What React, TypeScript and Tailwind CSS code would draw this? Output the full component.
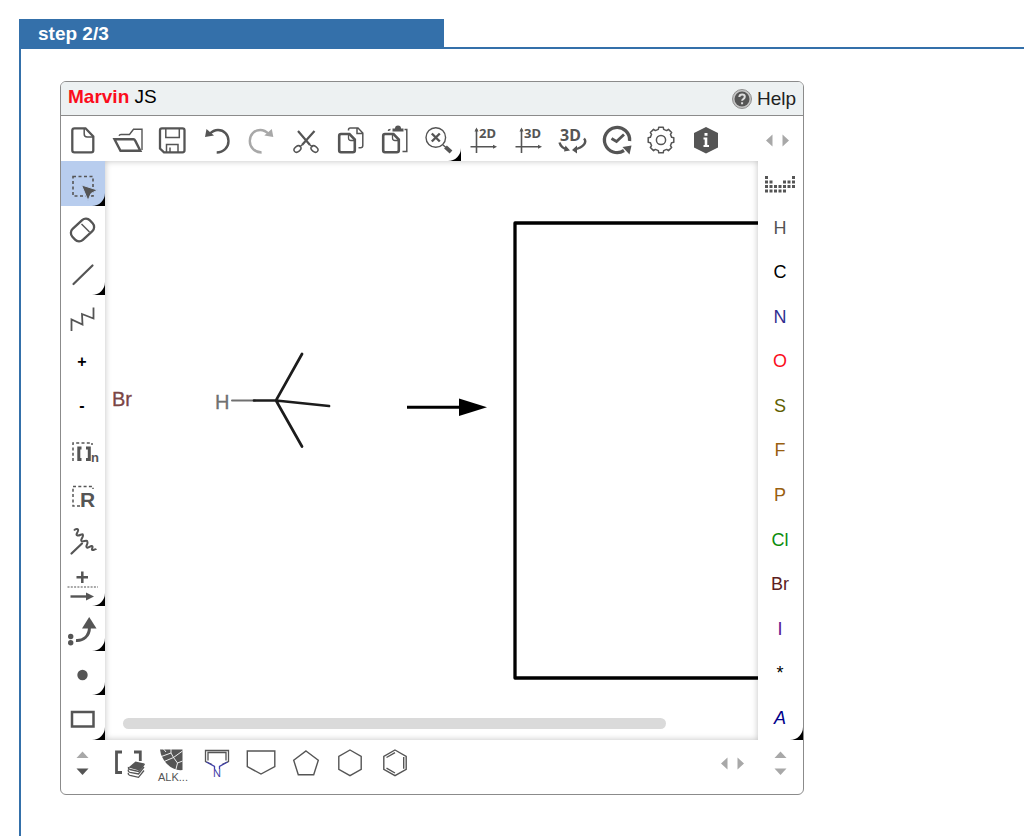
import type { ReactNode } from "react";

type Tool = {
  label: string;
  icon: ReactNode;
  menu?: boolean;
  active?: boolean;
};

const INK = "#555555";
const PALE = "#a8a8a8";

// gear outline, eight teeth
const gearPoints = Array.from({ length: 8 }, (_, i) =>
  [
    [-14, 11],
    [-10, 13],
    [10, 13],
    [14, 11],
  ].map(([deg, r]) => {
    const a = ((i * 45 + deg) * Math.PI) / 180;
    return `${(22 + r * Math.sin(a)).toFixed(2)},${(23 - r * Math.cos(a)).toFixed(2)}`;
  }),
)
  .flat()
  .join(" ");

const hexagon = "22,10 33.2,16.3 33.2,29.3 22,35.7 10.8,29.3 10.8,16.3";

const undoShape = (
  <>
    <path d="M14.5 17Q18.5 13 23 13C29 13 33.5 17.5 33.5 24C33.5 30.5 28.5 35.5 21.7 35.5" strokeWidth="2.4" />
    <path d="M10 20L11.5 12L19 18.5Z" fill="currentColor" stroke="none" />
  </>
);

const axes = (
  <>
    <path d="M15.5 12V36M9.5 29.7H34" strokeWidth="1.6" />
    <path d="M13.5 14.5L15.5 10.5L17.5 14.5ZM32 27.7L36 29.7L32 31.7Z" fill="currentColor" stroke="none" />
  </>
);

const topTools: Tool[] = [
  {
    label: "New",
    icon: (
      <>
        <path d="M11.3 13.5Q11.3 11.3 13.5 11.3H24.5L32.3 19.5V33.2Q32.3 35.3 30.2 35.3H13.5Q11.3 35.3 11.3 33.2Z" strokeWidth="2.3" />
        <path d="M23.2 12V17Q23.2 20 26.2 20H32" strokeWidth="1.5" />
      </>
    ),
  },
  {
    label: "Open",
    icon: (
      <>
        <path d="M8.5 22.3H27.5Q28.5 22.3 29.2 23.6L34.3 33.7H14.5Z" strokeWidth="2.4" />
        <path d="M13 18.7Q13.5 17.5 15 17.5H23.5L27.5 12.3H36V33" strokeWidth="1.4" />
      </>
    ),
  },
  {
    label: "Save",
    icon: (
      <>
        <path d="M12 11.3H32.5Q34.5 11.3 34.5 13.3V33.3Q34.5 35.3 32.5 35.3H14L10 31.5V13.3Q10 11.3 12 11.3Z" strokeWidth="2.3" />
        <path d="M15.8 12V20.5H29.3V12M16.5 35V27.5H28V35M20 30.5V35" strokeWidth="1.5" />
      </>
    ),
  },
  { label: "Undo", icon: undoShape },
  { label: "Redo", icon: <g transform="translate(44.3 0) scale(-1 1)" color={PALE} stroke="currentColor">{undoShape}</g> },
  {
    label: "Cut",
    icon: (
      <>
        <path d="M14 14L26 28M30.5 14L18 28" strokeWidth="2.2" />
        <ellipse cx="13.5" cy="32" rx="3.8" ry="2.7" transform="rotate(-38 13.5 32)" strokeWidth="1.5" />
        <ellipse cx="30.5" cy="32" rx="3.8" ry="2.7" transform="rotate(38 30.5 32)" strokeWidth="1.5" />
        <path d="M26 28L29 30M18 28L15.5 30" strokeWidth="1.5" />
      </>
    ),
  },
  {
    label: "Copy",
    icon: (
      <>
        <path d="M20.5 13.5V12.8Q20.5 11 22.3 11H30L34.8 16V28.5Q34.8 30.8 32.5 30.8H30.5M29 11.5V16.5H34.5" strokeWidth="1.5" />
        <path d="M13 17H21.5L26.8 22.5V33.3Q26.8 35.3 24.8 35.3H13Q11.2 35.3 11.2 33.3V19Q11.2 17 13 17Z" strokeWidth="2.6" />
        <path d="M20.5 18V21Q20.5 23.5 23 23.5H26" strokeWidth="1.3" />
      </>
    ),
  },
  {
    label: "Paste",
    icon: (
      <>
        <path d="M16.5 14Q16.5 12.5 18.5 12.5M32.5 12.5H34.8V34.5H30.5" strokeWidth="1.5" />
        <path d="M20.500 14.5V11.500H23Q23 8.500 26 8.5Q29 8.5 29 11.5H31.500V14.5Z" fill="currentColor" stroke="none" />
        <path d="M13 17H21.5L26.8 22.5V33.3Q26.8 35.3 24.8 35.3H13Q11.2 35.3 11.2 33.3V19Q11.2 17 13 17Z" strokeWidth="2.6" />
        <path d="M20.5 18V21Q20.5 23.5 23 23.5H26" strokeWidth="1.3" />
      </>
    ),
  },
  {
    label: "Zoom",
    menu: true,
    icon: (
      <>
        <circle cx="18.8" cy="20.5" r="9.8" strokeWidth="1.4" />
        <path d="M14.8 16.5L22.8 24.5M22.8 16.5L14.8 24.5" strokeWidth="2.4" />
        <path d="M26 28L29 30.5" strokeWidth="1.5" />
        <path d="M28.5 30L34 35" strokeWidth="4" />
      </>
    ),
  },
  {
    label: "Clean in 2D",
    icon: (
      <>
        {axes}
        <text x="18" y="21" fill="currentColor" stroke="none" className="font-['Noto_Sans',sans-serif] text-[13px] font-bold">2D</text>
      </>
    ),
  },
  {
    label: "Clean in 3D",
    icon: (
      <>
        {axes}
        <text x="18" y="21" fill="currentColor" stroke="none" className="font-['Noto_Sans',sans-serif] text-[13px] font-bold">3D</text>
      </>
    ),
  },
  {
    label: "3D view",
    icon: (
      <>
        <text x="10" y="24" fill="currentColor" stroke="none" className="font-['Noto_Sans',sans-serif] text-base font-bold">3D</text>
        <path d="M9.5 25.5Q11 31 17.5 32.5M34 21.500Q36.5 24 34 27.5Q31 31 25 32.3" strokeWidth="2.4" />
        <path d="M22 33L27 28.5V36.5ZM15.500 28.500L20 33.500L14 34.500Z" fill="currentColor" stroke="none" />
      </>
    ),
  },
  {
    label: "Auto clean",
    icon: (
      <>
        <path d="M29 33.5A12.6 12.6 0 1 1 34.6 24" strokeWidth="3.3" />
        <path d="M27.5 30L36.5 28.5L34.5 37.5Z" fill="currentColor" stroke="none" />
        <path d="M16.5 21.5L21.5 24.5L29 17.5" strokeWidth="2.8" />
      </>
    ),
  },
  {
    label: "Settings",
    icon: (
      <>
        <polygon points={gearPoints} strokeWidth="1.5" strokeLinejoin="round" />
        <circle cx="22" cy="23" r="4.6" strokeWidth="1.5" />
      </>
    ),
  },
  {
    label: "About",
    icon: (
      <>
        <polygon points="22,10 34,16 34,30.5 22,36.5 10,30.5 10,16" fill="currentColor" stroke="none" />
        <path d="M19.5 20.5H23.3V28H25V30H19.5V28H20.7V22.5H19.5ZM20.5 16H23.5V18.8H20.5Z" fill="#fff" stroke="none" />
      </>
    ),
  },
];

const leftTools: Tool[] = [
  {
    label: "Select",
    active: true,
    menu: true,
    icon: (
      <>
        <path d="M12 14.500H32V34H12Z" strokeWidth="1.6" strokeDasharray="3 2.5" />
        <path d="M20.5 23L36.5 28L30 31.500L27 38.500Z" fill="currentColor" stroke="#b8cdee" strokeWidth="1" />
      </>
    ),
  },
  {
    label: "Erase",
    icon: (
      <>
        <rect x="-12" y="-7.5" width="24" height="15" rx="5.500" transform="translate(21.5 24) rotate(-43)" strokeWidth="2.3" />
        <path d="M20.5 18L28.5 26" strokeWidth="1.4" />
      </>
    ),
  },
  { label: "Single bond", menu: true, icon: <path d="M12.5 33L31.5 14.5" strokeWidth="2.2" strokeLinecap="round" /> },
  { label: "Chain", icon: <path d="M10.500 36V24.5L21.500 29.500L21 19L32.500 23.500V12.500" strokeWidth="1.8" /> },
  { label: "Increase charge", icon: <text x="21" y="27" textAnchor="middle" fill="#000" stroke="none" className="text-base font-bold">+</text> },
  { label: "Decrease charge", icon: <text x="21" y="27" textAnchor="middle" fill="#000" stroke="none" className="text-base font-bold">-</text> },
  {
    label: "Repeating unit",
    icon: (
      <>
        <path d="M12 32V14H31V16" strokeWidth="1.5" strokeDasharray="3 2.3" />
        <path d="M20.500 19H17.800V30.500H20.500M25 19H28.300V30.500H25" strokeWidth="3" />
        <text x="30" y="33" fill="currentColor" stroke="none" className="text-[13px] font-bold">n</text>
      </>
    ),
  },
  {
    label: "R-group",
    icon: (
      <>
        <path d="M19 33H12V13.500H32V16" strokeWidth="1.5" strokeDasharray="3 2.3" />
        <text x="19" y="34" fill="currentColor" stroke="none" className="text-[21px] font-bold">R</text>
      </>
    ),
  },
  {
    label: "Position variation bond",
    icon: (
      <>
        <path d="M10.5 35.5L21 25.500" strokeWidth="2.2" strokeLinecap="round" />
        <path
          d="M13 12.500C14.500 10.500 18 10.500 17 13C16 15.500 14.500 17 16.500 17.500C19 18 22 14.500 22 17.500C22 20 19 21.500 20.500 23C22 24.500 26 21 26.500 24C27 26.500 24 28.500 26 29.500C28 30.500 30.500 26.500 31.500 28.500C32 30 30 31.500 31.500 32C33 32.500 34.500 30 35 32"
          strokeWidth="2"
        />
      </>
    ),
  },
  {
    label: "Reaction",
    menu: true,
    icon: (
      <>
        <path d="M21.3 9.5V21M15.5 15.3H27" strokeWidth="2.5" />
        <path d="M6.5 25H37" strokeWidth="1.2" strokeDasharray="2 1.3" />
        <path d="M9.5 34.5H27" strokeWidth="2.4" />
        <path d="M25 30.5L33 34.5L25 38.5Z" fill="currentColor" stroke="none" />
      </>
    ),
  },
  {
    label: "Electron flow",
    menu: true,
    icon: (
      <>
        <circle cx="9.7" cy="29.500" r="2.7" fill="currentColor" stroke="none" />
        <circle cx="9.7" cy="35.700" r="2.7" fill="currentColor" stroke="none" />
        <path d="M15 33.500C22 34 28.5 29.500 28.5 20" strokeWidth="3" />
        <path d="M28.2 10L21 21.5H35.5Z" fill="currentColor" stroke="none" />
      </>
    ),
  },
  { label: "Radical", menu: true, icon: <circle cx="21.5" cy="24" r="5.2" fill="currentColor" stroke="none" /> },
  { label: "Rectangle", menu: true, icon: <rect x="11" y="16" width="21.5" height="14.5" strokeWidth="2.5" /> },
];

const elements = [
  { symbol: "H", color: "text-[#555555]" },
  { symbol: "C", color: "text-black" },
  { symbol: "N", color: "text-[#303090]" },
  { symbol: "O", color: "text-[#fb0d1b]" },
  { symbol: "S", color: "text-[#606000]" },
  { symbol: "F", color: "text-[#996010]" },
  { symbol: "P", color: "text-[#996010]" },
  { symbol: "Cl", color: "text-[#0c8c0c]" },
  { symbol: "Br", color: "text-[#5c2020]" },
  { symbol: "I", color: "text-[#5a1094]" },
  { symbol: "*", color: "text-black" },
  { symbol: "A", color: "text-[#00008b] italic", menu: true },
];

const scrollVertical = (upColor: string, downColor: string) => (
  <>
    <path d="M15.5 18L21.5 11.5L27.5 18Z" fill={upColor} stroke="none" />
    <path d="M15.5 28.5H27.5L21.5 35Z" fill={downColor} stroke="none" />
  </>
);

const scrollHorizontal = (
  <path d="M7 23.5L13.5 17.5V29.5ZM23.500 17.5L30 23.5L23.500 29.5Z" fill={PALE} stroke="none" />
);

const templates: Tool[] = [
  { label: "Scroll groups", icon: scrollVertical(PALE, INK) },
  {
    label: "Template library",
    icon: (
      <>
        <path d="M16 12H10.5V32.5H16M28 12H34.3V21" strokeWidth="2.8" />
        <path d="M22.5 27.5L29.5 21.5L38.5 23.5L33 30.5Z" fill="currentColor" stroke="none" />
        <path d="M22.5 29.5Q21.5 31.5 24 32.3L32.5 34L38 27M22.5 32.8Q21.5 34.5 24 35.3L32.5 37.3L38 30.5M22.5 27Q22 29 24 29.5L32.5 31.5L38.5 24" strokeWidth="1.3" />
      </>
    ),
  },
  {
    label: "Alkaloids",
    icon: (
      <>
        <path d="M10 9.5H32.5V30Q24 31 17 24Q11 18 10 9.5Z" fill="currentColor" stroke="none" />
        <path d="M10 17L21 13L23.5 17.5L13 22M21 13V9M23.5 17.5L32.5 11M23.5 17.5L27.5 23L25.5 31M27.5 23L32.5 21M13.5 9L16 12" stroke="#fff" strokeWidth="0.9" />
        <text x="23" y="41" textAnchor="middle" fill={INK} stroke="none" className="text-[11px]">ALK...</text>
      </>
    ),
  },
  {
    label: "Pyrrole",
    icon: (
      <>
        <path d="M17 24.500L10.5 21.5V10.5H33.5V21.5L27 24.500M13 20.500V12.500H31V20.500" strokeWidth="1.300" />
        <path d="M11.5 22L19.5 26.5V29M32.5 22L24.5 26.5V29" stroke="#4040a8" strokeWidth="1.3" />
        <text x="22" y="37" textAnchor="middle" fill="#4040a8" stroke="none" className="text-[11px]">N</text>
      </>
    ),
  },
  { label: "Cyclopentane, envelope", icon: <polygon points="8.3,11 35.8,11 35.8,26.7 22,34 8.3,26.7" strokeWidth="1.4" /> },
  { label: "Cyclopentane", icon: <polygon points="22,11 34.3,20.3 29.7,34.7 14.3,34.7 9.7,20.3" strokeWidth="1.4" /> },
  { label: "Cyclohexane", icon: <polygon points={hexagon} strokeWidth="1.4" /> },
  {
    label: "Benzene",
    icon: (
      <>
        <polygon points={hexagon} strokeWidth="1.4" />
        <path d="M13.5 17.5L22 12.7M30.7 17V28.7M13.5 28.2L22 33" strokeWidth="1.4" />
      </>
    ),
  },
];

function Icon({ children }: { children: ReactNode }) {
  return (
    <svg viewBox="0 0 44 44" className="h-11 w-11 shrink-0" fill="none" stroke="currentColor" aria-hidden="true">
      {children}
    </svg>
  );
}

function MenuCorner() {
  return (
    <svg viewBox="0 0 11 11" className="absolute right-0 bottom-0 h-[13px] w-[13px]" aria-hidden="true">
      <path d="M11 0V11H0A11 11 0 0 0 11 0Z" fill="#000" />
    </svg>
  );
}

function ToolButton({ tool }: { tool: Tool }) {
  return (
    <button
      type="button"
      aria-label={tool.label}
      className={`relative flex items-end justify-center ${tool.active ? "bg-[#b8cdee]" : ""}`}
    >
      <Icon>{tool.icon}</Icon>
      {tool.menu && <MenuCorner />}
    </button>
  );
}

function Canvas() {
  return (
    <div className="relative min-w-0 flex-1 overflow-hidden shadow-[inset_0_0_6px_rgba(0,0,0,0.25)]">
      <svg
        viewBox="0 0 653 579"
        preserveAspectRatio="xMinYMin slice"
        className="absolute inset-0 h-full w-full"
        role="img"
        aria-label="Reaction drawing"
      >
        <text x="7" y="245" fill="#7b4545" stroke="#7b4545" strokeWidth="0.3" className="text-xl">Br</text>
        <text x="110" y="248" fill="#707070" stroke="#707070" strokeWidth="0.3" className="text-xl">H</text>
        <g stroke="#1c1c1c" strokeWidth="2.7" strokeLinecap="round" fill="none">
          <path d="M127 239.5H150" stroke="#707070" strokeWidth="2" />
          <path d="M149 239.5H171L197 193M171 239.5L224 245M171 239.5L197 285.5" />
        </g>
        <path d="M302 246.3H356" stroke="#000" strokeWidth="3" />
        <path d="M354 237.5L382 246.3L354 255Z" fill="#000" />
        <path d="M660 62H410V517H660" fill="none" stroke="#000" strokeWidth="3.300" strokeLinejoin="round" />
      </svg>
      <div className="absolute inset-x-4 bottom-[11px]">
        <div className="ml-[2px] h-[11px] w-7/8 rounded-full bg-[#dadada]" />
      </div>
    </div>
  );
}

function PeriodicDots() {
  const rows = ["x.....x", "xx..xxx", "xxxxxxx", "xxxxx.."];
  return (
    <>
      {rows.map((row, y) =>
        row.split("").map((cell, x) =>
          cell === "x" ? (
            <rect key={`${x}-${y}`} x={6 + x * 4.5} y={14 + y * 4.5} width="3" height="3" fill="currentColor" stroke="none" />
          ) : null,
        ),
      )}
    </>
  );
}

function Editor() {
  return (
    <div className="w-full max-w-[744px] overflow-hidden rounded-md border border-[#8b8b8b] bg-white text-[#555555]">
      <header className="flex h-[34px] items-center justify-between border-b border-[#8b8b8b] bg-[#edf1f2] px-[7px] text-[19px] leading-6">
        <h2 className="pb-1 text-black">
          <strong className="text-[#fb0d1b]">Marvin</strong> JS
        </h2>
        <a href="#help" className="flex items-center gap-1 text-[#222222]">
          <svg viewBox="0 0 22 22" className="h-[22px] w-[22px]" aria-hidden="true">
            <circle cx="11" cy="11" r="9.5" fill="#c4c4c4" stroke="#8f8f8f" />
            <circle cx="11" cy="11" r="7.5" fill="#555555" />
            <path d="M8.3 9Q8.5 6.5 11.1 6.5Q13.8 6.5 13.8 8.8Q13.8 10.2 12.3 11Q11.1 11.7 11.1 12.8M11.1 14.3V16.3" fill="none" stroke="#dddddd" strokeWidth="2" />
          </svg>
          Help
        </a>
      </header>

      <div className="flex h-[45px] justify-between">
        <div className="grid w-[667px] grid-cols-15">
          {topTools.map((tool) => (
            <ToolButton key={tool.label} tool={tool} />
          ))}
        </div>
        <div className="grid w-[45px]">
          <ToolButton tool={{ label: "Scroll toolbar", icon: scrollHorizontal }} />
        </div>
      </div>

      <div className="flex min-h-[579px]">
        <div className="grid w-11 auto-rows-fr">
          {leftTools.map((tool) => (
            <ToolButton key={tool.label} tool={tool} />
          ))}
        </div>
        <Canvas />
        <div className="grid w-[45px] auto-rows-fr">
          <ToolButton tool={{ label: "Periodic table", icon: <PeriodicDots /> }} />
          {elements.map(({ symbol, color, menu }) => (
            <button key={symbol} type="button" className={`relative pr-px text-lg leading-6 ${color}`}>
              {symbol}
              {menu && <MenuCorner />}
            </button>
          ))}
        </div>
      </div>

      <div className="flex justify-between pb-[10px]">
        <div className="grid w-[356px] grid-cols-8">
          {templates.map((tool) => (
            <ToolButton key={tool.label} tool={tool} />
          ))}
        </div>
        <div className="flex">
          <ToolButton tool={{ label: "Scroll templates", icon: scrollHorizontal }} />
          <div className="grid w-[45px]">
            <ToolButton tool={{ label: "Scroll elements", icon: scrollVertical(PALE, PALE) }} />
          </div>
        </div>
      </div>
    </div>
  );
}

export default function App() {
  return (
    <main className="flex min-h-screen bg-white pt-[19px] pl-[19px] font-['Liberation_Sans',Arial,sans-serif]">
      <section className="min-w-0 flex-1 border-l-2 border-[#3470aa]">
        <div className="border-b-2 border-[#3470aa]">
          <h1 className="h-7 max-w-[423px] bg-[#3470aa] px-[17px] text-[19px] leading-[30px] font-bold text-white">
            step 2/3
          </h1>
        </div>
        <div className="pt-8 pl-[39px]">
          <Editor />
        </div>
      </section>
    </main>
  );
}
